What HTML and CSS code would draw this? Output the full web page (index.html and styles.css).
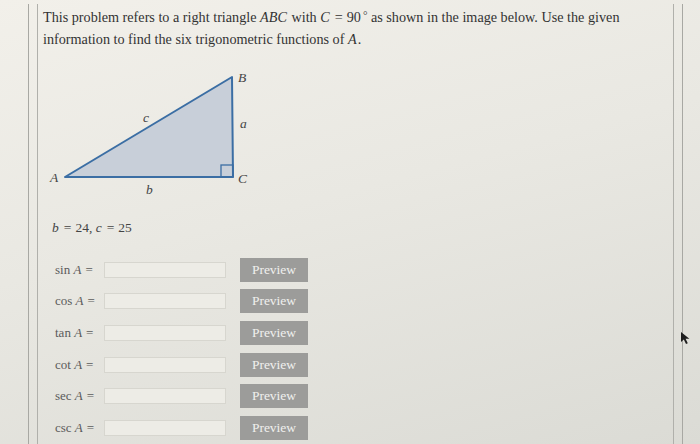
FILE: index.html
```html
<!DOCTYPE html>
<html lang="en">
<head>
  <meta charset="UTF-8" />
  <meta name="viewport" content="width=device-width, initial-scale=1.0" />
  <title>Right Triangle</title>
  <link rel="stylesheet" href="styles.css">
</head>
<body>
  <div class="frame">
    <div class="sheet">
      <p class="intro">This problem refers to a right triangle <span class="var">ABC</span> with <span class="var">C</span><span class="eq">=</span>90<span class="deg">&deg;</span> as shown in the image below. Use the given<br>information to find the six trigonometric functions of <span class="var">A</span>.</p>

      <svg class="figure" width="230" height="140" viewBox="0 0 230 140">
        <polygon points="25,117 192,17 193,117" fill="#c8cfd9" stroke="#3b6ea4" stroke-width="2" stroke-linejoin="round" />
        <rect x="181" y="105" width="12" height="12" fill="none" stroke="#3b6ea4" stroke-width="1.3" />
        <text x="198" y="22">B</text>
        <text x="200" y="68">a</text>
        <text x="198" y="123">C</text>
        <text x="103" y="62">c</text>
        <text x="10" y="122">A</text>
        <text x="106" y="134">b</text>
      </svg>

      <p class="given"><span class="var">b</span><span class="eq">=</span>24, <span class="var">c</span><span class="eq">=</span>25</p>

      <div class="answers">
        <div class="row"><span class="fn">sin <span class="var">A</span><span class="eq">=</span></span><input class="ans" type="text"><button class="preview">Preview</button></div>
        <div class="row"><span class="fn">cos <span class="var">A</span><span class="eq">=</span></span><input class="ans" type="text"><button class="preview">Preview</button></div>
        <div class="row"><span class="fn">tan <span class="var">A</span><span class="eq">=</span></span><input class="ans" type="text"><button class="preview">Preview</button></div>
        <div class="row"><span class="fn">cot <span class="var">A</span><span class="eq">=</span></span><input class="ans" type="text"><button class="preview">Preview</button></div>
        <div class="row"><span class="fn">sec <span class="var">A</span><span class="eq">=</span></span><input class="ans" type="text"><button class="preview">Preview</button></div>
        <div class="row"><span class="fn">csc <span class="var">A</span><span class="eq">=</span></span><input class="ans" type="text"><button class="preview">Preview</button></div>
      </div>
    </div>
  </div>

  <!-- mouse pointer sitting over the page -->
  <svg class="cursor" width="12" height="14" viewBox="0 0 12 14">
    <path d="M1 1 L1 11 L3.8 8.4 L6 13 L7.8 12.2 L5.6 7.7 L9.4 7.7 Z" fill="#1e1e1e" />
  </svg>
</body>
</html>
```

FILE: styles.css
```css
html, body {
  height: 100%;
}
body {
  margin: 0;
  overflow: hidden;
  font-family: "Liberation Serif", "Times New Roman", serif;
  background: linear-gradient(165deg, #f2f0ea 0%, #e9e8e2 45%, #dbdbd5 100%);
  color: #333;
}
.frame {
  height: 100%;
  margin: 0 17px 0 28px;
  padding: 0 8px;
  border-left: 1px solid #a8a8a3;
  border-right: 1px solid #a8a8a3;
}
.sheet {
  height: 100%;
  border-left: 1px solid #b0b0ab;
  border-right: 1px solid #b0b0ab;
}
.var {
  font-style: italic;
  padding-right: 1px;
}
.eq {
  margin: 0 4px;
}
.deg {
  margin-left: 2px;
  font-size: 0.8em;
  vertical-align: 3px;
}
.intro {
  margin: 4px 0 0 5px;
  font-size: 14.2px;
  line-height: 22px;
  white-space: nowrap;
}
.figure {
  display: block;
  margin: 10px 0 0 2px;
  font-family: "Liberation Serif", serif;
  font-style: italic;
  font-size: 13.5px;
  fill: #444;
}
.given {
  margin: 18px 0 0 14px;
  font-size: 13.5px;
  line-height: 20px;
  color: #444;
}
.answers {
  margin-top: 16px;
  padding-left: 17px;
}
.row {
  display: flex;
  align-items: center;
  height: 31.6px;
}
.fn {
  width: 49px;
  font-size: 13px;
  color: #5b5b5b;
  white-space: nowrap;
}
.fn .eq {
  margin: 0 0 0 3px;
}
.ans {
  width: 122px;
  height: 16px;
  box-sizing: border-box;
  margin: 0;
  border: 1px solid #d7d6cf;
  background: #edece6;
}
.preview {
  width: 68px;
  height: 24px;
  margin-left: 14px;
  padding: 0;
  border: none;
  background: #9c9c9a;
  color: #f0f0ee;
  font-family: "Liberation Serif", serif;
  font-size: 13.5px;
}
.cursor {
  position: absolute;
  left: 680px;
  top: 331px;
}
```
